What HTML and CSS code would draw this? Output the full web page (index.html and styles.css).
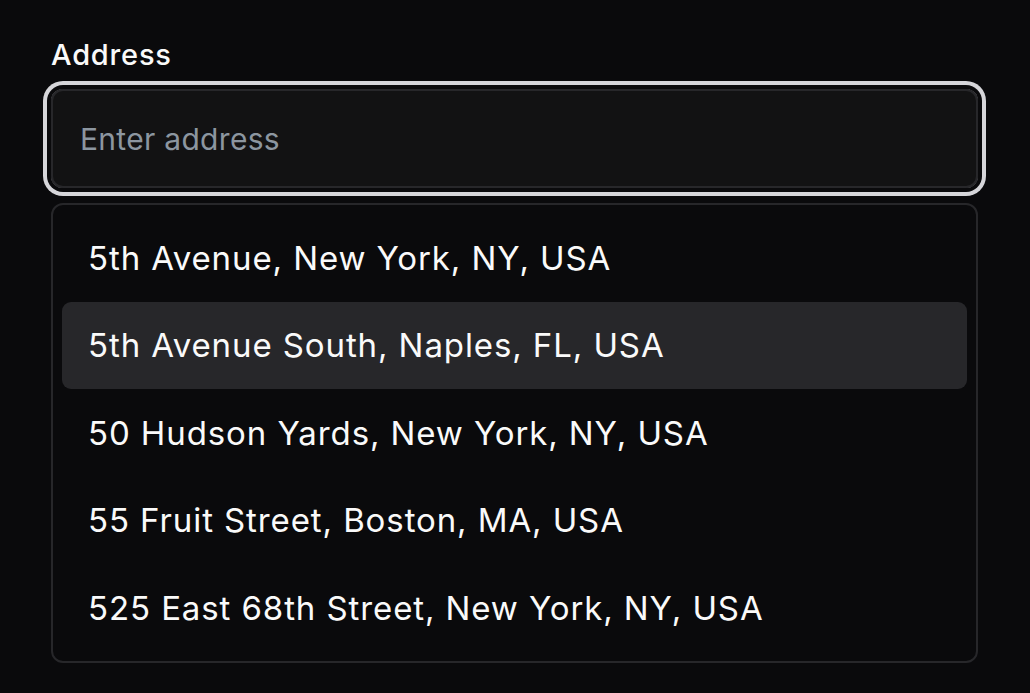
FILE: index.html
```html
<!DOCTYPE html>
<html lang="en">
<head>
<meta charset="utf-8">
<title>Address</title>
<link rel="stylesheet" href="styles.css">
</head>
<body>
<div class="field">
  <label class="label" for="addr">Address</label>
  <div class="input-wrap">
    <input id="addr" class="input" type="text" placeholder="Enter address">
  </div>
  <ul class="menu">
    <li class="item">5th Avenue, New York, NY, USA</li>
    <li class="item active">5th Avenue South, Naples, FL, USA</li>
    <li class="item">50 Hudson Yards, New York, NY, USA</li>
    <li class="item">55 Fruit Street, Boston, MA, USA</li>
    <li class="item">525 East 68th Street, New York, NY, USA</li>
  </ul>
</div>
</body>
</html>
```
FILE: styles.css
```css
html, body {
  margin: 0;
  padding: 0;
  background: #0a0a0c;
  height: 100%;
}
body {
  font-family: Inter, "Noto Sans", sans-serif;
  color: #fafafa;
}
.field {
  width: 927px;
  padding: 36px 0 0 51px;
  display: flex;
  flex-direction: column;
}
.label {
  font-size: 29px;
  font-weight: 500;
  letter-spacing: 0.8px;
  line-height: 38px;
  color: #fafafa;
  margin-bottom: 15px;
}
.input-wrap {
  border-radius: 12px;
  box-shadow: 0 0 0 4px #0a0a0c, 0 0 0 8px #d6d6da;
}
.input {
  display: block;
  box-sizing: border-box;
  width: 100%;
  height: 99px;
  background: #121213;
  border: 2px solid #27272a;
  border-radius: 12px;
  padding: 0 27px;
  font-family: inherit;
  font-size: 30px;
  letter-spacing: 0.3px;
  color: #fafafa;
  outline: none;
}
.input::placeholder {
  color: #8c96a0;
}
.menu {
  list-style: none;
  margin: 15px 0 0;
  padding: 9px 9px;
  border: 2px solid #27272a;
  border-radius: 12px;
  background: #0a0a0c;
}
.item {
  height: 87.5px;
  display: flex;
  align-items: center;
  padding: 0 26px;
  border-radius: 9px;
  font-size: 33px;
  letter-spacing: 0.9px;
  color: #fafafa;
}
.item.active {
  background: #27272a;
}
```
